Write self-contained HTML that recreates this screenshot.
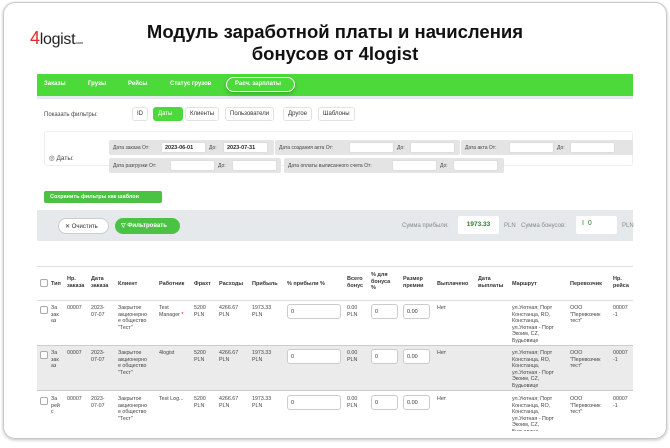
<!DOCTYPE html>
<html><head><meta charset="utf-8"><style>
*{margin:0;padding:0;box-sizing:border-box}
body{width:670px;height:448px;background:#fff;font-family:"Liberation Sans",sans-serif;position:relative;overflow:hidden;color:#333}
.card{position:absolute;left:3px;top:2px;width:664px;height:437px;border:1px solid #c8c8c8;border-radius:12px;box-shadow:0 1px 3px rgba(0,0,0,.25)}
.a{position:absolute;white-space:nowrap}
.t{font-size:6px;color:#444}
.inp{position:absolute;background:#fff;border:1px solid #ddd;border-radius:2px;height:11px;font-size:5.5px;padding:2px 3px;color:#222}
.tab{position:absolute;top:107px;height:14px;border:1px solid #e2e2e2;border-radius:3px;font-size:6px;padding:3px 4px;background:#fff;color:#333}
.cell{position:absolute;font-size:5.3px;line-height:6.5px;color:#444;white-space:nowrap}
.h{font-weight:bold;color:#333;font-size:5.5px}
.cb{position:absolute;width:8px;height:8px;border:1px solid #aaa;border-radius:2px;background:#fff}
.box{position:absolute;background:#fff;border:1px solid #ccc;border-radius:3px;height:15px;font-size:5.5px;padding:4px 3px}
</style></head><body>
<div class="a" style="left:37px;top:0;width:600px;height:431px;overflow:hidden" id="clip"></div>
<div class="a" style="left:30px;top:28px;font-size:16px;color:#222;letter-spacing:-0.3px"><span style="color:#e52a2a;font-size:18px">4</span>logist<span style="font-size:4px">.com</span></div>
<div class="a" style="left:120px;top:21px;width:430px;text-align:center;font-size:18.5px;font-weight:bold;color:#111;line-height:22px;white-space:normal">Модуль заработной платы и начисления бонусов от 4logist</div>
<div class="a" style="left:37px;top:74px;width:596px;height:22px;background:#4cd93a"></div>
<div class="a" style="left:37px;top:96px;width:596px;height:3px;background:#e6e8f0"></div>
<div class="a" style="left:44px;top:81px;font-size:6px;font-weight:bold;color:#fff">Заказы</div>
<div class="a" style="left:88px;top:81px;font-size:6px;font-weight:bold;color:#fff">Грузы</div>
<div class="a" style="left:128px;top:81px;font-size:6px;font-weight:bold;color:#fff">Рейсы</div>
<div class="a" style="left:170px;top:81px;font-size:6px;font-weight:bold;color:#fff">Статус грузов</div>
<div class="a" style="left:226px;top:77px;width:69px;height:15px;border:1.5px solid #fff;border-radius:8px;font-size:6px;font-weight:bold;color:#fff;padding:3px 0 0 8px;box-shadow:0 2px 4px rgba(0,0,0,.2)">Расч. зарплаты</div>
<div class="a t" style="left:44px;top:112px">Показать фильтры:</div>
<div class="tab" style="left:132px">ID</div>
<div class="tab" style="left:153px;background:#4cd93a;color:#fff;border-color:#4cd93a;width:30px">Даты</div>
<div class="tab" style="left:185px">Клиенты</div>
<div class="tab" style="left:225px">Пользователи</div>
<div class="tab" style="left:283px">Другое</div>
<div class="tab" style="left:318px">Шаблоны</div>
<div class="a" style="left:44px;top:131px;width:589px;height:35px;border:1px solid #eee;border-radius:3px"></div>
<div class="a" style="left:49px;top:154px;font-size:6.5px;color:#444">◎ Даты:</div>
<div class="a" style="left:109px;top:140px;width:165px;height:15px;background:#e4e4e4;border-radius:2px"></div>
<div class="a" style="left:275px;top:140px;width:185px;height:15px;background:#e4e4e4;border-radius:2px"></div>
<div class="a" style="left:461px;top:140px;width:172px;height:15px;background:#e4e4e4;border-radius:2px"></div>
<div class="a" style="left:109px;top:158px;width:172px;height:15px;background:#e4e4e4;border-radius:2px"></div>
<div class="a" style="left:284px;top:158px;width:220px;height:15px;background:#e4e4e4;border-radius:2px"></div>
<div class="a t" style="left:113px;top:145px;font-size:5px">Дата заказа От:</div>
<div class="inp" style="left:161px;top:142px;width:45px;font-weight:bold">2023-06-01</div>
<div class="a t" style="left:209px;top:145px;font-size:5px">До:</div>
<div class="inp" style="left:223px;top:142px;width:45px;font-weight:bold">2023-07-31</div>
<div class="a t" style="left:279px;top:145px;font-size:5px">Дата создания акта От:</div>
<div class="inp" style="left:349px;top:142px;width:45px"></div>
<div class="a t" style="left:397px;top:145px;font-size:5px">До:</div>
<div class="inp" style="left:410px;top:142px;width:45px"></div>
<div class="a t" style="left:465px;top:145px;font-size:5px">Дата акта От:</div>
<div class="inp" style="left:509px;top:142px;width:45px"></div>
<div class="a t" style="left:557px;top:145px;font-size:5px">До:</div>
<div class="inp" style="left:570px;top:142px;width:45px"></div>
<div class="a t" style="left:113px;top:163px;font-size:5px">Дата разгрузки От:</div>
<div class="inp" style="left:170px;top:160px;width:45px"></div>
<div class="a t" style="left:218px;top:163px;font-size:5px">До:</div>
<div class="inp" style="left:232px;top:160px;width:45px"></div>
<div class="a t" style="left:288px;top:163px;font-size:5px">Дата оплаты выписанного счета От:</div>
<div class="inp" style="left:392px;top:160px;width:45px"></div>
<div class="a t" style="left:440px;top:163px;font-size:5px">До:</div>
<div class="inp" style="left:453px;top:160px;width:45px"></div>
<div class="a" style="left:44px;top:191px;width:118px;height:12px;background:#4cc244;border-radius:2px;font-size:5.5px;font-weight:bold;color:#fff;padding:3px 0 0 6px">Сохранить фильтры как шаблон</div>
<div class="a" style="left:37px;top:210px;width:596px;height:31px;background:#e6e9ec"></div>
<div class="a" style="left:58px;top:218px;width:51px;height:16px;background:#fff;border:1px solid #ccc;border-radius:8px;font-size:6px;padding:4px 0 0 6px;color:#333">✕ Очистить</div>
<div class="a" style="left:115px;top:218px;width:65px;height:16px;background:#4cc244;border-radius:8px;font-size:6px;font-weight:bold;color:#fff;padding:4px 0 0 6px">▽ Фильтровать</div>
<div class="a t" style="left:402px;top:223px;color:#888">Сумма прибыли:</div>
<div class="a" style="left:458px;top:216px;width:41px;height:18px;background:#fff;border-radius:2px;font-size:6.5px;color:#2a7a2a;font-weight:bold;text-align:center;padding-top:5px">1973.33</div>
<div class="a t" style="left:504px;top:223px;color:#888">PLN</div>
<div class="a t" style="left:521px;top:223px;color:#888">Сумма бонусов:</div>
<div class="a" style="left:576px;top:216px;width:41px;height:18px;background:#fff;border-radius:2px;font-size:7px;color:#2a7a2a;padding:4px 0 0 6px">I &nbsp;0</div>
<div class="a t" style="left:622px;top:223px;color:#888">PLN</div>
<div class="a" style="left:37px;top:266px;width:596px;height:1px;background:#ddd"></div>
<div class="a" style="left:37px;top:300px;width:596px;height:1px;background:#ddd"></div>
<div class="a" style="left:37px;top:345px;width:596px;height:46px;background:#ebebeb;border-top:1px solid #ccc;border-bottom:1px solid #ccc"></div>
<div class="cb" style="left:40px;top:279px"></div>
<div class="cell h" style="left:51px;top:281px">Тип</div>
<div class="cell h" style="left:67px;top:276px">Нр.<br>заказа</div>
<div class="cell h" style="left:91px;top:276px">Дата<br>заказа</div>
<div class="cell h" style="left:118px;top:281px">Клиент</div>
<div class="cell h" style="left:159px;top:281px">Работник</div>
<div class="cell h" style="left:194px;top:281px">Фрахт</div>
<div class="cell h" style="left:219px;top:281px">Расходы</div>
<div class="cell h" style="left:252px;top:281px">Прибыль</div>
<div class="cell h" style="left:287px;top:281px">% прибыли %</div>
<div class="cell h" style="left:347px;top:276px">Всего<br>бонус</div>
<div class="cell h" style="left:371px;top:272px">% для<br>бонуса<br>%</div>
<div class="cell h" style="left:403px;top:276px">Размер<br>премии</div>
<div class="cell h" style="left:437px;top:281px">Выплачено</div>
<div class="cell h" style="left:478px;top:276px">Дата<br>выплаты</div>
<div class="cell h" style="left:512px;top:281px">Маршрут</div>
<div class="cell h" style="left:570px;top:281px">Перевозчик</div>
<div class="cell h" style="left:613px;top:276px">Нр.<br>рейса</div>
<div class="a" style="left:0;top:0;width:670px;height:431px;overflow:hidden" id="rows"></div>
<div class="card"></div>
<script>
var tops=[305,350,396],typ=["За<br>зак<br>аз","За<br>зак<br>аз","За<br>рей<br>с"],w=["Test<br>Manager <span style='color:#d00'>*</span>","4logist","Test Log..."];
var h="";
for(var i=0;i<3;i++){var y=tops[i];
h+='<div class="cb" style="left:40px;top:'+(y+1)+'px"></div>';
h+='<div class="cell" style="left:51px;top:'+y+'px">'+typ[i]+'</div>';
h+='<div class="cell" style="left:67px;top:'+y+'px">00007</div>';
h+='<div class="cell" style="left:91px;top:'+y+'px">2023-<br>07-07</div>';
h+='<div class="cell" style="left:118px;top:'+y+'px">Закрытое<br>акционерно<br>е общество<br>"Тест"</div>';
h+='<div class="cell" style="left:159px;top:'+y+'px">'+w[i]+'</div>';
h+='<div class="cell" style="left:194px;top:'+y+'px">5200<br>PLN</div>';
h+='<div class="cell" style="left:219px;top:'+y+'px">4266.67<br>PLN</div>';
h+='<div class="cell" style="left:252px;top:'+y+'px">1973.33<br>PLN</div>';
h+='<div class="box" style="left:287px;top:'+(y-1)+'px;width:54px">0</div>';
h+='<div class="cell" style="left:347px;top:'+y+'px">0.00<br>PLN</div>';
h+='<div class="box" style="left:371px;top:'+(y-1)+'px;width:27px">0</div>';
h+='<div class="box" style="left:403px;top:'+(y-1)+'px;width:27px">0.00</div>';
h+='<div class="cell" style="left:437px;top:'+y+'px">Нет</div>';
h+='<div class="cell" style="left:512px;top:'+y+'px">ул.Уютная; Порт<br>Констанца, RO,<br>Констанца,<br>ул.Уютная - Порт<br>Экоим, CZ,<br>Будьовице</div>';
h+='<div class="cell" style="left:570px;top:'+y+'px">ООО<br>"Перевозчик<br>тест"</div>';
h+='<div class="cell" style="left:613px;top:'+y+'px">00007<br>-1</div>';}
document.getElementById("rows").innerHTML=h;
</script>
</body></html>
